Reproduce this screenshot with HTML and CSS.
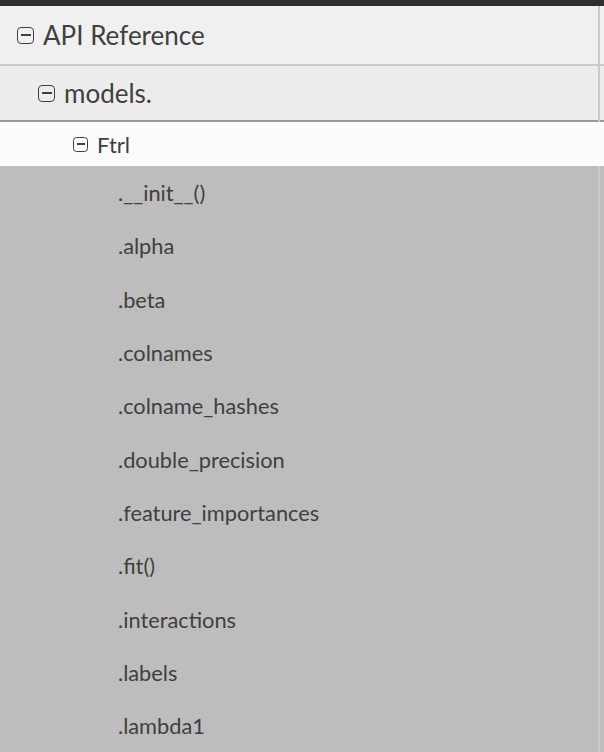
FILE: index.html
```html
<!DOCTYPE html>
<html>
<head>
    <title>API Reference</title>
    <link rel="stylesheet" href="styles.css">
</head>
<body>
    <div id="topbar"></div>
    <div id="nav">
        <div class="nav-row nav-level1">
            <span class="toggle"></span>API Reference
        </div>
        <div class="nav-row nav-level2">
            <span class="toggle"></span>models.
        </div>
        <div class="nav-row nav-level3 current">
            <span class="toggle toggle-small"></span>Ftrl
        </div>
        <ul class="member-list">
            <li class="member">.__init__()</li>
            <li class="member">.alpha</li>
            <li class="member">.beta</li>
            <li class="member">.colnames</li>
            <li class="member">.colname_hashes</li>
            <li class="member">.double_precision</li>
            <li class="member">.feature_importances</li>
            <li class="member">.fit()</li>
            <li class="member">.interactions</li>
            <li class="member">.labels</li>
            <li class="member">.lambda1</li>
        </ul>
    </div>
</body>
</html>
```

FILE: styles.css
```css
body {
    margin: 0;
    font-family: Lato, "Open Sans", sans-serif;
    color: #404040;
    background-color: #bdbdbd;
    overflow: hidden;
}

#topbar {
    height: 6px;
    background-color: #302f2d;
}

#nav {
    position: relative;
}

/* thin scroll edge on the right */
#nav::after {
    content: "";
    position: absolute;
    top: 0;
    bottom: 0;
    right: 4px;
    width: 2px;
    background-color: #cacaca;
}

.nav-row {
    display: flex;
    align-items: center;
}

.nav-level1 {
    height: 58px;
    padding-left: 17px;
    font-size: 26px;
    background-color: #f0f0f0;
    border-bottom: 2px solid #c9c9c9;
}

.nav-level2 {
    height: 54px;
    padding-left: 38px;
    font-size: 26px;
    background-color: #ededed;
    border-bottom: 2px solid #999;
}

.nav-level3 {
    height: 44px;
    padding-left: 73px;
    font-size: 22px;
    background-color: #fcfcfc;
}

.current {
    position: relative;
    z-index: 1;
}

.toggle {
    box-sizing: border-box;
    width: 17px;
    height: 17px;
    border: 1.5px solid #404040;
    border-radius: 4px;
    margin-right: 9px;
    position: relative;
    flex: none;
}

.toggle::after {
    content: "";
    position: absolute;
    left: 2.5px;
    right: 2.5px;
    top: 6.5px;
    height: 1.5px;
    background-color: #404040;
}

.toggle-small {
    width: 15px;
    height: 15px;
    border-radius: 3.5px;
}

.toggle-small::after {
    top: 5.5px;
}

.member-list {
    list-style: none;
    margin: 0;
    padding: 0;
}

.member {
    height: 53.3px;
    display: flex;
    align-items: center;
    padding-left: 118px;
    font-size: 21.8px;
}
```
